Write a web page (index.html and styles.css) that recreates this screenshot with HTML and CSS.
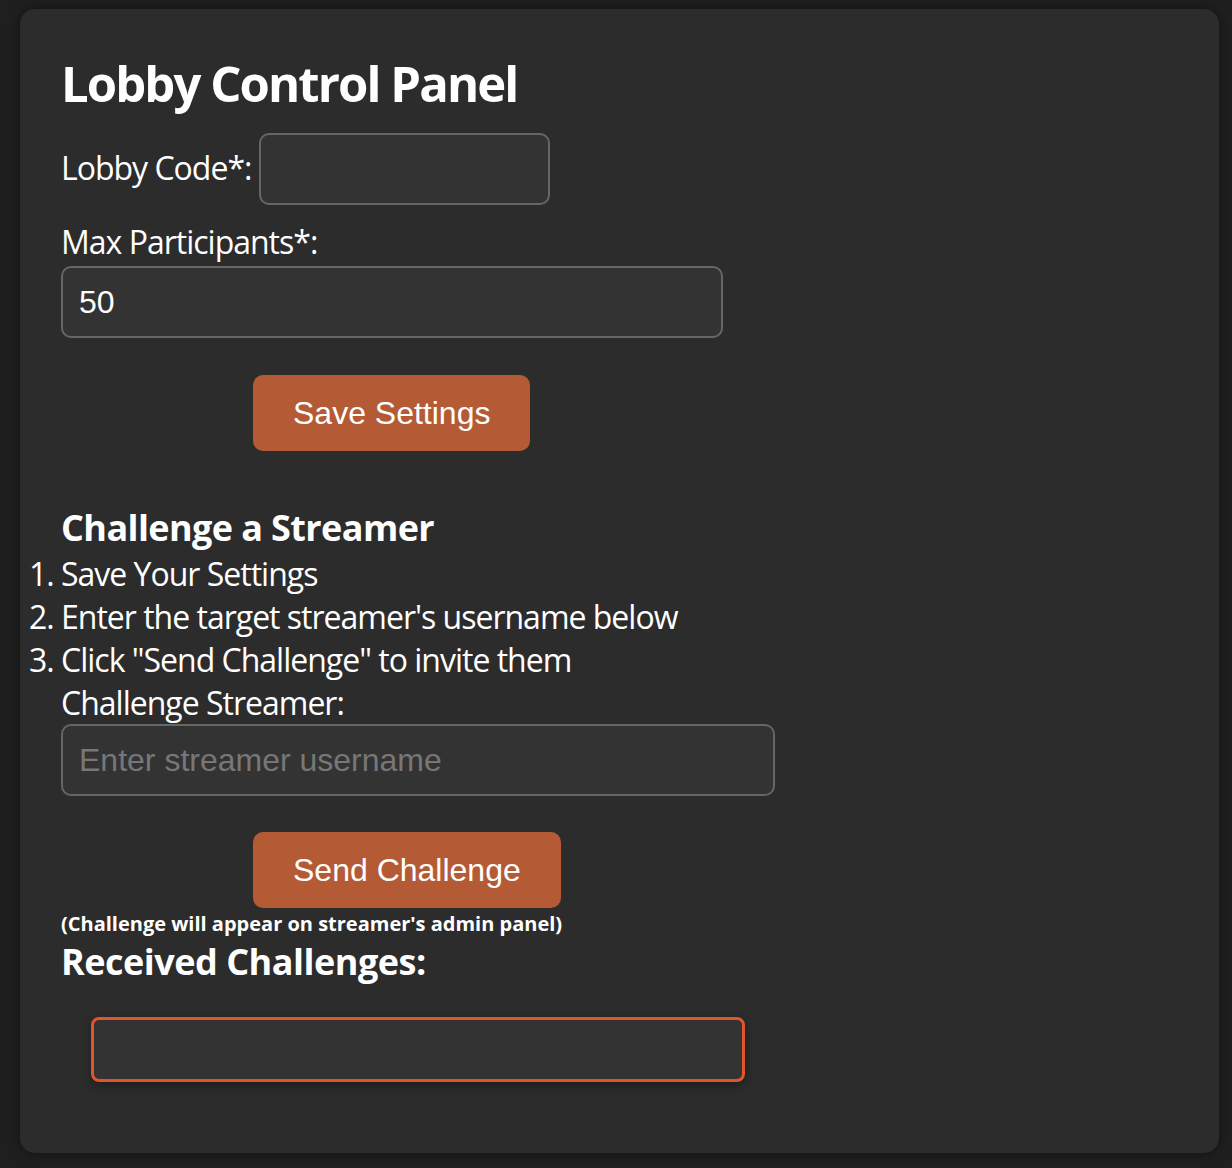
FILE: index.html
```html
<!DOCTYPE html>
<html lang="en">
<head>
<meta charset="utf-8">
<title>Lobby Control Panel</title>
<link rel="stylesheet" href="styles.css">
</head>
<body>
<div class="panel">
  <h1 class="title">Lobby Control Panel</h1>
  <div class="inline-row">
    <label class="label" for="lobby-code">Lobby Code*:</label>
    <input class="field field-code" id="lobby-code" type="text">
  </div>
  <label class="label label-block label-max" for="max-participants">Max Participants*:</label>
  <input class="field field-max" id="max-participants" type="text" value="50">
  <button class="btn btn-save" type="button">Save Settings</button>

  <h2 class="section-title">Challenge a Streamer</h2>
  <ol class="steps">
    <li>Save Your Settings</li>
    <li>Enter the target streamer's username below</li>
    <li>Click "Send Challenge" to invite them</li>
  </ol>
  <label class="label label-block" for="challenge-user">Challenge Streamer:</label>
  <input class="field field-challenge" id="challenge-user" type="text" placeholder="Enter streamer username">
  <button class="btn btn-send" type="button">Send Challenge</button>
  <p class="note">(Challenge will appear on streamer's admin panel)</p>
  <h3 class="received-title">Received Challenges:</h3>
  <div class="received-box"></div>
</div>
</body>
</html>
```
FILE: styles.css
```css
html, body {
  margin: 0;
  padding: 0;
  background: #1f1f1f;
}

body {
  font-family: "Open Sans", "Noto Sans", sans-serif;
  color: #ffffff;
  font-size: 32px;
  line-height: 43px;
  letter-spacing: -1px;
}

.panel {
  margin: 9px 13px 15px 20px;
  padding: 45px 41px 71px 41px;
  background: #2c2c2c;
  border-radius: 15px;
  box-shadow: 0 0 12px rgba(0, 0, 0, 0.45);
}

.title {
  margin: 0 0 21px 0;
  font-size: 49px;
  line-height: 58px;
  font-weight: 700;
  letter-spacing: -1.9px;
}

.inline-row {
  display: flex;
  align-items: baseline;
  gap: 8px;
}

.label {
  font-size: 32px;
  line-height: 43px;
}

.label-block {
  display: block;
}

.label-max {
  margin-top: 15px;
}

.field {
  display: block;
  box-sizing: border-box;
  height: 72px;
  margin: 0;
  padding: 16px 16px;
  font-family: "Liberation Sans", Arial, sans-serif;
  font-size: 32px;
  line-height: 36px;
  letter-spacing: 0;
  color: #ffffff;
  background: #333333;
  border: 2px solid #666666;
  border-radius: 10px;
  outline: none;
}

.field::placeholder {
  color: #777777;
}

.field-code {
  width: 291px;
}

.field-max {
  width: 662px;
  margin-top: 3px;
}

.field-challenge {
  width: 714px;
}

.btn {
  display: block;
  margin-left: 192px;
  padding: 20px 40px;
  font-family: "Liberation Sans", Arial, sans-serif;
  font-size: 32px;
  line-height: 36px;
  letter-spacing: 0;
  color: #ffffff;
  background: #b45b36;
  border: none;
  border-radius: 10px;
}

.btn-save {
  margin-top: 37px;
}

.btn-send {
  margin-top: 36px;
}

.section-title {
  margin: 55px 0 0 0;
  font-size: 36px;
  line-height: 44px;
  font-weight: 700;
  letter-spacing: -0.6px;
}

.steps {
  margin: 2px 0 0 0;
  padding: 0;
  list-style-position: outside;
}

.note {
  margin: 4px 0 0 0;
  font-size: 20px;
  line-height: 24px;
  font-weight: 700;
  letter-spacing: 0;
}

.received-title {
  margin: 4px 0 0 0;
  font-size: 36px;
  line-height: 44px;
  font-weight: 700;
  letter-spacing: -0.5px;
}

.received-box {
  box-sizing: border-box;
  width: 654px;
  height: 65px;
  margin: 33px 0 0 30px;
  background: #333333;
  border: 3px solid #e0562a;
  border-radius: 8px;
  box-shadow: 0 4px 10px rgba(0, 0, 0, 0.35);
}
```
